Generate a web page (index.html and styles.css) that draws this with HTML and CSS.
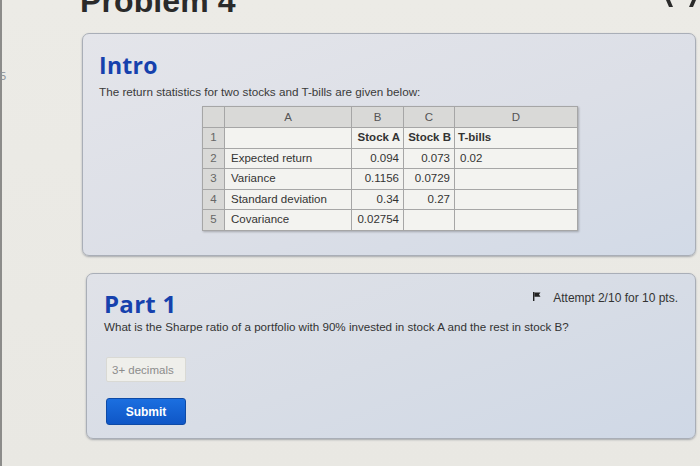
FILE: index.html
```html
<!DOCTYPE html>
<html lang="en">
<head>
<meta charset="utf-8">
<title>Problem 4</title>
<link rel="stylesheet" href="styles.css">
</head>
<body>
<div class="screen">
  <aside class="gutter"><span class="edge-mark">5</span></aside>
  <main class="main">
    <header class="top">
      <h1 class="problem-title">Problem 4</h1>
      <div class="nav-icons">
        <svg class="nav-icon" width="9" height="20" viewBox="0 0 9 20"><path d="M8 0 L1 13 L4 20 L8 20 L5 13 Z" fill="#2b2b2b"/></svg>
        <svg class="nav-icon" width="9" height="20" viewBox="0 0 9 20"><path d="M1 0 L8 13 L5 20 L1 20 L4 13 Z" fill="#2b2b2b"/></svg>
      </div>
    </header>

    <section class="card intro-card">
      <h2 class="card-title">Intro</h2>
      <p class="lead">The return statistics for two stocks and T-bills are given below:</p>
      <table class="sheet">
        <thead>
          <tr><th class="rn"></th><th class="ca">A</th><th class="cb">B</th><th class="cc">C</th><th class="cd">D</th></tr>
        </thead>
        <tbody>
          <tr><td class="rn">1</td><td></td><td class="num strong">Stock A</td><td class="num strong">Stock B</td><td class="strong">T-bills</td></tr>
          <tr><td class="rn">2</td><td>Expected return</td><td class="num">0.094</td><td class="num">0.073</td><td>0.02</td></tr>
          <tr><td class="rn">3</td><td>Variance</td><td class="num">0.1156</td><td class="num">0.0729</td><td></td></tr>
          <tr><td class="rn">4</td><td>Standard deviation</td><td class="num">0.34</td><td class="num">0.27</td><td></td></tr>
          <tr><td class="rn">5</td><td>Covariance</td><td class="num">0.02754</td><td></td><td></td></tr>
        </tbody>
      </table>
    </section>

    <section class="card part-card">
      <div class="part-head">
        <h2 class="card-title part-title">Part 1</h2>
        <div class="attempt">
          <svg class="flag" width="8" height="9" viewBox="0 0 8 9"><rect x="0" y="0" width="1.4" height="9" fill="#222"/><path d="M1.4 0.5 H7.5 L6 2.6 L7.5 4.8 H1.4 Z" fill="#222"/></svg>
          <span>Attempt 2/10 for 10 pts.</span>
        </div>
      </div>
      <p class="question">What is the Sharpe ratio of a portfolio with 90% invested in stock A and the rest in stock B?</p>
      <input class="answer" type="text" placeholder="3+ decimals">
      <button class="submit" type="button">Submit</button>
    </section>
  </main>
</div>
</body>
</html>
```

FILE: styles.css
```css
html, body {
  margin: 0;
  padding: 0;
}

body {
  width: 700px;
  height: 466px;
  overflow: hidden;
  background: linear-gradient(to bottom, #ecebe6, #e9e8e3);
  font-family: "Liberation Sans", Arial, sans-serif;
  color: #333;
}

.screen {
  display: grid;
  grid-template-columns: 80px 620px;
  height: 466px;
  border-left: 2px solid #8c8c8a;
  box-sizing: border-box;
}

.gutter {
  padding-top: 70px;
}

.edge-mark {
  display: block;
  margin-left: -2px;
  font-size: 11px;
  color: #8a8f96;
}

.main {
  display: flex;
  flex-direction: column;
  margin-left: -2px;
}

.top {
  display: flex;
  justify-content: space-between;
  align-items: flex-end;
  height: 27px;
  margin-top: -16px;
}

.problem-title {
  margin: 0 0 -6px 0;
  font-family: "Liberation Sans", Arial, sans-serif;
  font-size: 32px;
  line-height: 32px;
  font-weight: 700;
  color: #2a2a2a;
  letter-spacing: 0.1px;
}

.nav-icons {
  display: flex;
  gap: 14px;
  margin-right: 5px;
  margin-bottom: 4px;
}

.nav-icon {
  display: block;
}

.card {
  border: 1px solid #a9aeb7;
  border-radius: 7px;
  box-shadow: 0 1px 2px rgba(40, 50, 70, 0.35);
  box-sizing: border-box;
}

.intro-card {
  margin: 22px 6px 0 2px;
  height: 223px;
  padding: 17px 16px 0 16px;
  background: linear-gradient(160deg, #e4e5ea 0%, #dcdfe7 55%, #d2dae7 100%);
}

.card-title {
  margin: 0;
  font-family: "Open Sans", "Liberation Sans", sans-serif;
  font-weight: 700;
  font-size: 23px;
  line-height: 28px;
  color: #1641ad;
  letter-spacing: 0.3px;
}

.lead {
  margin: 5px 0 0 0;
  font-size: 11.7px;
  line-height: 16px;
  color: #3a3a3a;
}

.sheet {
  margin: 6px 0 0 103px;
  border-collapse: collapse;
  border: 1px solid #6f6f6f;
  box-shadow: 1px 1px 2px rgba(0, 0, 0, 0.25);
  font-size: 11.5px;
  color: #333;
  table-layout: fixed;
}

.sheet th,
.sheet td {
  border: 1px solid #a6a6a6;
  padding: 0 5px;
  height: 19.5px;
  line-height: 19.5px;
  white-space: nowrap;
  background: #f3f3f0;
  text-align: left;
}

.sheet th {
  height: 20px;
  line-height: 20px;
  background: #d9d9d7;
  font-weight: 400;
  color: #555;
  text-align: center;
}

.sheet td.rn {
  background: #d9d9d7;
  color: #666;
  text-align: center;
  padding: 0;
}

.sheet th.rn { width: 21px; padding: 0; }
.sheet th.ca { width: 116px; }
.sheet th.cb { width: 41px; }
.sheet th.cc { width: 40px; }
.sheet th.cd { width: 112px; }

.sheet td:nth-child(2) {
  padding-left: 6px;
}

.sheet td.num {
  text-align: right;
  padding-right: 4px;
}

.sheet td.strong {
  font-weight: 700;
  padding-left: 3px;
  padding-right: 3px;
}

.part-card {
  margin: 17px 6px 0 6px;
  height: 166px;
  padding: 16px 17px 0 17px;
  background: linear-gradient(160deg, #e0e2e8 0%, #d8dde6 50%, #cfd8e6 100%);
  display: flex;
  flex-direction: column;
  align-items: flex-start;
}

.part-head {
  display: flex;
  justify-content: space-between;
  align-items: flex-start;
  align-self: stretch;
}

.part-title {
  font-size: 24px;
}

.attempt {
  display: flex;
  align-items: center;
  gap: 12px;
  font-size: 12px;
  line-height: 14px;
  color: #333;
  margin-top: 1px;
}

.flag {
  display: block;
  margin-top: -3px;
}

.question {
  margin: 1px 0 0 0;
  font-size: 11.6px;
  line-height: 16px;
  color: #333;
}

.answer {
  margin: 22px 0 0 2px;
  width: 80px;
  height: 25px;
  box-sizing: border-box;
  border: 1px solid #d9d9d4;
  border-radius: 2px;
  background: #efefeb;
  padding: 0 5px;
  font-family: "Liberation Sans", Arial, sans-serif;
  font-size: 11.5px;
  color: #555;
}

.answer::placeholder {
  color: #8c8c8c;
}

.submit {
  margin: 16px 0 0 2px;
  width: 80px;
  height: 27px;
  box-sizing: border-box;
  border: 1px solid #0e4aa6;
  border-radius: 3px;
  background: linear-gradient(to bottom, #1b6fe0, #0f56c6);
  color: #ffffff;
  font-family: "Liberation Sans", Arial, sans-serif;
  font-size: 12px;
  font-weight: 700;
  padding: 0;
}
```
